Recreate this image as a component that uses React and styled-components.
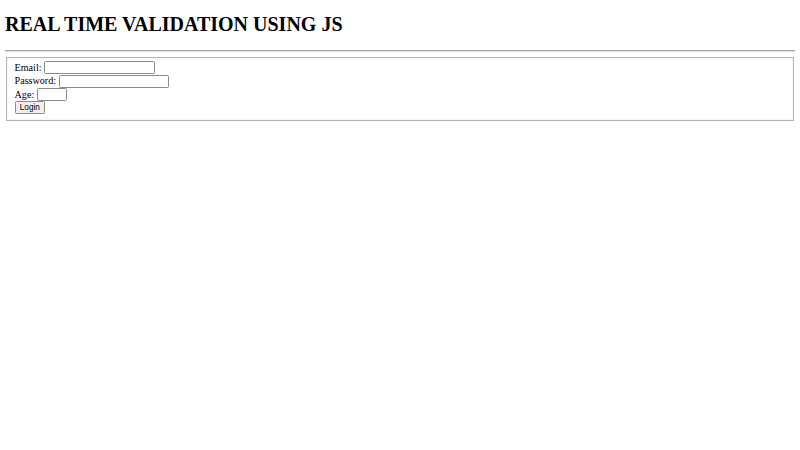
import React from "react";
import styled, { createGlobalStyle } from "styled-components";

const GlobalStyle = createGlobalStyle`
    html, body {
        background: #ffffff;
    }
    body {
        margin: 0 5px 5px;
        font-family: "Liberation Serif", "Times New Roman", serif;
        font-size: 10.1px;
        color: #000000;
    }
`;

function App() {
    return (
        <>
            <GlobalStyle />
            <Title>REAL TIME VALIDATION USING JS</Title>
            <Rule />
            <Form onSubmit={(e) => e.preventDefault()}>
                <Fields>
                    <Row>
                        <Label htmlFor="email">Email:</Label>
                        <Input id="email" type="text" />
                    </Row>
                    <Row>
                        <Label htmlFor="password">Password:</Label>
                        <Input id="password" type="password" />
                    </Row>
                    <Row>
                        <Label htmlFor="age">Age:</Label>
                        <Input id="age" type="text" $small />
                    </Row>
                    <Row>
                        <Button type="submit">Login</Button>
                    </Row>
                </Fields>
            </Form>
        </>
    );
}

export default App;

const Title = styled.h1`
    margin: 13.2px 0 0;
    font-size: 20px;
    font-weight: bold;
    line-height: 22.6px;
`;
const Rule = styled.hr`
    margin: 14.4px 0 4.4px;
    height: 0;
    border: none;
    border-top: 1px solid #a4a4a4;
    border-bottom: 1px solid #e2e2e2;
`;
const Form = styled.form`
    margin: 0;
`;
const Fields = styled.fieldset`
    margin: 0 1.2px;
    padding: 3.6px 7.4px 6px;
    border: 1px solid #b4b4b4;
    box-shadow: inset 0 0 0 0.3px #e0e0e0;
    display: flex;
    flex-direction: column;
`;
const Row = styled.div`
    height: 13.3px;
    display: flex;
    align-items: center;
`;
const Label = styled.label`
    line-height: 11.3px;
    margin-right: 2.6px;
`;
const Input = styled.input`
    box-sizing: border-box;
    width: ${(p) => (p.$small ? "30px" : "110.5px")};
    height: 12.8px;
    padding: 0 1.2px;
    border: 1px solid #8a8a8a;
    border-radius: 1.5px;
    background: #ffffff;
    font-family: "Liberation Sans", Arial, sans-serif;
    font-size: 8.2px;
    outline: none;
`;
const Button = styled.button`
    box-sizing: border-box;
    width: 30.5px;
    height: 12.7px;
    padding: 0;
    border: 1px solid #8a8a8a;
    border-radius: 1.5px;
    background: #efefef;
    color: #000000;
    font-family: "Liberation Sans", Arial, sans-serif;
    font-size: 8.2px;
    line-height: 10px;
`;
